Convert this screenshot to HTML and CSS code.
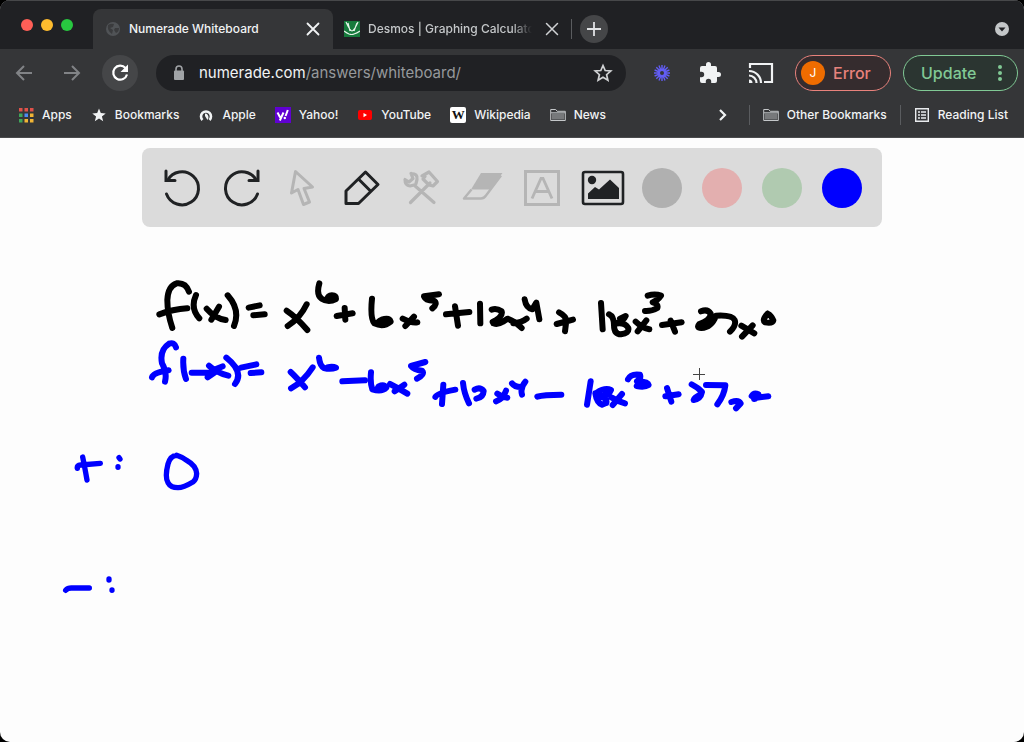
FILE: index.html
```html
<!DOCTYPE html>
<html lang="en">
<head>
<meta charset="utf-8">
<meta name="viewport" content="width=device-width, initial-scale=1">
<title>Numerade Whiteboard</title>
<link rel="stylesheet" href="styles.css">
</head>
<body>
<div class="window">
  <header class="chrome">
    <div class="tabstrip">
      <div class="lights">
        <button class="light light-close" aria-label="Close window"></button>
        <button class="light light-min" aria-label="Minimize window"></button>
        <button class="light light-max" aria-label="Zoom window"></button>
      </div>
      <div class="tab tab-active">
        <svg class="icon" viewBox="0 0 16 16" aria-hidden="true"><circle cx="8" cy="8" r="7" fill="#505356"/><path d="M3 4q3-2 6-1l-1 3-3 1 3 2-1 4q-5-3-4-9zM10 7l4 0q0 4-3 5l-2-3z" fill="#3a3b3d"/></svg>
        <span class="tab-title">Numerade Whiteboard</span>
        <button class="plain" aria-label="Close Numerade Whiteboard"><svg class="icon" viewBox="0 0 16 16"><path d="M2.500 2.500l11 11m0-11l-11 11" stroke="#f1f3f4" stroke-width="1.800" stroke-linecap="round"/></svg></button>
      </div>
      <div class="tab tab-idle">
        <svg class="icon" viewBox="0 0 16 16" aria-hidden="true"><path d="M0 0h16v16H0z" fill="#167a3c"/><path d="M0 10q3 2 5 3 3 1 5 0 3-1 6-3M2 1q4 9 6 9t6-9M4 2l2 8m7-8l-3 8" fill="none" stroke="#e5f3e9" stroke-width="1.200"/></svg>
        <span class="tab-title tab-faded">Desmos | Graphing Calculator</span>
        <button class="plain" aria-label="Close Desmos"><svg class="icon" viewBox="0 0 16 16"><path d="M2.500 2.500l11 11m0-11l-11 11" stroke="#d0d2d4" stroke-width="1.500" stroke-linecap="round"/></svg></button>
      </div>
      <span class="rule"></span>
      <button class="new-tab" aria-label="New tab"><svg class="icon" viewBox="0 0 16 16"><path d="M8 1v14M1 8h14" stroke="#e0e2e4" stroke-width="1.800"/></svg></button>
      <button class="plain tab-search" aria-label="Search tabs"><svg class="icon" viewBox="0 0 16 16"><circle cx="8" cy="8" r="7" fill="#c4c7c9"/><path d="M4.500 6.500h7L8 10.500z" fill="#202124"/></svg></button>
    </div>

    <nav class="toolbar" aria-label="Navigation">
      <button class="nav-btn" aria-label="Back"><svg class="glyph" viewBox="0 0 20 20"><path d="M18 10H3m7-7l-7 7 7 7" fill="none" stroke="#818386" stroke-width="2"/></svg></button>
      <button class="nav-btn" aria-label="Forward"><svg class="glyph" viewBox="0 0 20 20"><path d="M2 10h15m-7-7l7 7-7 7" fill="none" stroke="#818386" stroke-width="2"/></svg></button>
      <button class="nav-btn nav-reload" aria-label="Reload"><svg class="glyph" viewBox="0 0 20 20"><path d="M15.500 5A7 7 0 1 0 17 11.500" fill="none" stroke="#fff" stroke-width="2.200"/><path d="M18 1.500V9h-7.500z" fill="#fff"/></svg></button>
      <div class="omnibox">
        <svg class="icon" viewBox="0 0 16 16" aria-hidden="true"><path d="M5 7V4a3 3 0 0 1 6 0v3" fill="none" stroke="#a0a3a6" stroke-width="1.600"/><rect x="3" y="5.500" width="10" height="9.500" rx="1" fill="#a0a3a6"/></svg>
        <a class="url" href="#"><span class="host">numerade.com</span>/answers/whiteboard/</a>
        <button class="plain" aria-label="Bookmark this page"><svg class="glyph" viewBox="0 0 20 20"><path d="M10 2.500l2.200 5 5.600.5-4.200 3.700 1.300 5.500L10 14.300l-4.900 2.900 1.300-5.500L2.200 8l5.600-.5z" fill="none" stroke="#d0d2d4" stroke-width="1.700"/></svg></button>
      </div>
      <div class="extensions">
        <button class="plain" aria-label="Loom"><svg class="glyph" viewBox="0 0 20 20"><path d="M10 2v16M2 10h16M4.300 4.300l11.400 11.400m0-11.400L4.300 15.700M7 2.600l6 14.800M2.600 7l14.800 6M2.600 13l14.800-6M7 17.400l6-14.800" stroke="#625df5" stroke-width="1.400"/><circle cx="10" cy="10" r="4.500" fill="#625df5"/><circle cx="10" cy="10" r="2" fill="#353638"/></svg></button>
        <button class="plain" aria-label="Extensions"><svg class="big" viewBox="0 0 24 24"><path d="M20.500 11H19V7a2 2 0 0 0-2-2h-4V3.500a2.500 2.500 0 0 0-5 0V5H4a2 2 0 0 0-2 2v3.800h1.500a2.700 2.700 0 0 1 0 5.400H2V20a2 2 0 0 0 2 2h3.800v-1.500a2.700 2.700 0 0 1 5.400 0V22H17a2 2 0 0 0 2-2v-4h1.500a2.500 2.500 0 0 0 0-5z" fill="#f1f3f4"/></svg></button>
        <button class="plain" aria-label="Cast"><svg class="cast" viewBox="0 0 26 22"><path d="M2 6V2h22v18h-8" fill="none" stroke="#f1f3f4" stroke-width="2.200"/><path d="M1 9a12 12 0 0 1 12 12M1 13.500a7.500 7.500 0 0 1 7.500 7.500" fill="none" stroke="#f1f3f4" stroke-width="2.200"/><path d="M1 17.500a3.500 3.500 0 0 1 3.500 3.500H1z" fill="#f1f3f4"/></svg></button>
      </div>
      <button class="pill pill-error"><span class="avatar">J</span>Error</button>
      <button class="pill pill-update">Update<svg class="dots" viewBox="0 0 6 18" aria-hidden="true"><circle cx="3" cy="3" r="2" fill="#81c995"/><circle cx="3" cy="9" r="2" fill="#81c995"/><circle cx="3" cy="15" r="2" fill="#81c995"/></svg></button>
    </nav>

    <nav class="bookmarks" aria-label="Bookmarks">
      <a class="bookmark" href="#"><svg class="icon" viewBox="0 0 16 16"><path d="M1 1h3.500v3.500H1zM6.500 1H10v3.500H6.500zM12 1h3.500v3.500H12z" fill="#e0524a"/><path d="M1 6.500h3.500V10H1zM1 12h3.500v3.500H1z" fill="#3fa65a"/><path d="M6.500 6.500H10V10H6.500z" fill="#4a8af4"/><path d="M12 6.500h3.500V10H12zM6.500 12H10v3.500H6.500zM12 12h3.500v3.500H12z" fill="#f2b535"/></svg>Apps</a>
      <a class="bookmark" href="#"><svg class="icon" viewBox="0 0 16 16"><path d="M8 1.500l1.800 4.600 4.900.3-3.800 3.100 1.300 4.800L8 11.600l-4.200 2.700 1.300-4.800L1.300 6.400l4.900-.3z" fill="#f1f3f4"/></svg>Bookmarks</a>
      <a class="bookmark" href="#"><svg class="icon" viewBox="0 0 16 16"><path d="M4.500 13A5 5 0 1 1 11.500 13" fill="none" stroke="#f1f3f4" stroke-width="2.600"/><path d="M7 6.500q3.500 0 3.500 4.500l-1 2-2.500-4z" fill="#f1f3f4"/></svg>Apple</a>
      <a class="bookmark" href="#"><svg class="icon" viewBox="0 0 16 16"><path d="M0 0h16v16H0z" fill="#6001d2"/><path d="M2.500 5.500l2.700 5M8.500 5.500L4.800 13.500M12.800 3l-2.200 6" stroke="#fff" stroke-width="2"/><circle cx="9.800" cy="11" r="1.200" fill="#fff"/></svg>Yahoo!</a>
      <a class="bookmark" href="#"><svg class="icon" viewBox="0 0 16 16"><rect x="1" y="3" width="14" height="10" rx="2" fill="#f00"/><path d="M6.500 6v4.200L10 8z" fill="#fff"/></svg>YouTube</a>
      <a class="bookmark" href="#"><span class="wiki" aria-hidden="true">W</span>Wikipedia</a>
      <a class="bookmark" href="#"><svg class="icon" viewBox="0 0 16 16"><path d="M.7 13.500v-11h5l1.500 1.800h8.100v9.200z" fill="#353638" stroke="#c4c7c9"/><path d="M1.800 6.500h12.400v6H1.800z" fill="#77797b"/><path d="M1 5.800h14" stroke="#c4c7c9"/></svg>News</a>
      <button class="plain more" aria-label="More bookmarks"><svg class="icon" viewBox="0 0 16 16"><path d="M5 3l5 5-5 5" fill="none" stroke="#f1f3f4" stroke-width="2.200"/></svg></button>
      <span class="rule"></span>
      <a class="bookmark" href="#"><svg class="icon" viewBox="0 0 16 16"><path d="M.7 13.500v-11h5l1.500 1.800h8.100v9.200z" fill="#353638" stroke="#c4c7c9"/><path d="M1.800 6.500h12.400v6H1.800z" fill="#77797b"/><path d="M1 5.800h14" stroke="#c4c7c9"/></svg>Other Bookmarks</a>
      <span class="rule"></span>
      <a class="bookmark" href="#"><svg class="icon" viewBox="0 0 16 16"><path d="M1.700 1.700h12.600v12.600H1.700z" fill="none" stroke="#e8eaed" stroke-width="1.400"/><path d="M4 5h2m1 0h5M4 8h2m1 0h5M4 11h2m1 0h5" stroke="#e8eaed" stroke-width="1.400"/></svg>Reading List</a>
    </nav>
  </header>

  <main class="board">
    <div class="tools" role="toolbar" aria-label="Drawing tools">
      <button class="tool" aria-label="Undo"><svg viewBox="0 0 48 48"><path d="M8.500 30a16.500 16.500 0 1 0 1-13.500" fill="none" stroke="#202224" stroke-width="3" stroke-linecap="round"/><path d="M8 7v9.500h9" fill="none" stroke="#202224" stroke-width="3" stroke-linecap="round"/></svg></button>
      <button class="tool" aria-label="Redo"><svg viewBox="0 0 48 48"><path d="M39.500 30a16.500 16.500 0 1 1-1-13.500" fill="none" stroke="#202224" stroke-width="3" stroke-linecap="round"/><path d="M40 7v9.500h-9" fill="none" stroke="#202224" stroke-width="3" stroke-linecap="round"/></svg></button>
      <button class="tool" aria-label="Select"><svg viewBox="0 0 48 48"><path d="M17.500 7.500L13.500 29l6.500-3.500 5.500 15 6-2.500L26 24.500l8.500-1.500z" fill="none" stroke="#b5b5b5" stroke-width="3" stroke-linejoin="round"/></svg></button>
      <button class="tool" aria-label="Pen"><svg viewBox="0 0 48 48"><path d="M8 39.500V27L27.500 8 40 20.500 20.500 39.500zM20.500 15L33 27.500" fill="none" stroke="#202224" stroke-width="3" stroke-linejoin="round"/></svg></button>
      <button class="tool" aria-label="Shapes"><svg viewBox="0 0 48 48"><path d="M13 9.500l2 5-4 3.500-4-2.500q0 6 5 6.500l4-1L36 38.500M13 9.500q7 0 6 6l-1 4M12.500 38.500L32 19M24 12l7-4 8.500 9.500-4.500 4.500-4-1-6-6 2-2.500z" fill="none" stroke="#b5b5b5" stroke-width="3.200" stroke-linejoin="round" stroke-linecap="round"/></svg></button>
      <button class="tool" aria-label="Eraser"><svg viewBox="0 0 48 48"><path d="M23 9h21.500L32 25.500H13z" fill="#b5b5b5"/><path d="M13.500 25.500L6 34.500H23q3 0 5-3l15-20" fill="none" stroke="#b5b5b5" stroke-width="2.400" stroke-linejoin="round"/></svg></button>
      <button class="tool" aria-label="Text"><svg viewBox="0 0 48 48"><path d="M7.500 7.500h33v33h-33z" fill="none" stroke="#b5b5b5" stroke-width="3"/><path d="M14 34.500l9-20h2l9 20M17.500 27.500h13" fill="none" stroke="#b5b5b5" stroke-width="2.800"/></svg></button>
      <button class="tool" aria-label="Image"><svg viewBox="0 0 48 48"><rect x="5" y="8" width="40" height="32" rx="2" fill="none" stroke="#202224" stroke-width="2.600"/><circle cx="14" cy="16" r="4.200" fill="#202224"/><path d="M10 35v-5.500l7-6.500 4 2.500 11-10 9 8.500v11z" fill="#202224"/></svg></button>
      <button class="tool" aria-label="Gray"><span class="swatch swatch-gray"></span></button>
      <button class="tool" aria-label="Red"><span class="swatch swatch-red"></span></button>
      <button class="tool" aria-label="Green"><span class="swatch swatch-green"></span></button>
      <button class="tool" aria-label="Blue"><span class="swatch swatch-blue"></span></button>
    </div>

    <svg class="ink" viewBox="0 227 1024 515" role="img" aria-label="Handwritten polynomial f(x), f(-x) and sign counts">
      <g class="pen pen-black">
        <g transform="translate(140 270) scale(.33333)">
          <path d="M147 65Q137 37 110 40Q84 48 82 90Q82 130 97 174M58 133Q98 118 142 115M168 75Q150 115 178 145M200 116Q225 145 257 150M237 110L214 149M263 76Q302 120 282 168M326 113L359 106M340 136L374 133M440 122Q470 142 502 180M500 103Q480 145 443 168M538 40Q528 75 545 86Q565 99 588 87Q588 76 576 76Q564 77 562 86M590 138L638 130M614 114L616 149"/>
        </g>
        <g transform="translate(340 270) scale(.33333)">
          <path d="M96 86Q90 145 103 160Q130 173 152 155Q148 142 125 149Q115 153 112 160M188 146Q215 160 232 157M222 140L196 168M297 73L252 79Q257 92 281 92Q295 100 277 115M318 133L388 126M345 109L354 167M420 101L421 160M455 119Q470 114 485 124Q490 139 458 156Q467 168 489 155L502 146Q528 156 545 174M560 146Q545 158 520 160M460 160L480 156M554 88Q558 114 577 118L589 98L598 148"/>
        </g>
        <g transform="translate(540 270) scale(.33333)">
          <path d="M57 127Q78 138 79 152L75 184M50 162L99 149M183 99L188 178M207 133Q222 140 222 165Q222 193 243 193Q268 190 265 174Q254 156 228 161Q252 151 257 138L240 146M287 155Q308 175 328 178M319 151L293 184M323 77Q345 70 363 77Q353 92 338 97Q356 102 352 114Q336 124 315 123M366 165L425 157M392 152L405 185M483 124Q503 116 512 131Q513 149 478 162Q468 173 484 174Q515 172 528 137Q576 134 584 150Q590 165 570 185M604 167L643 190M638 166L606 200M683 131Q665 150 675 157Q698 161 700 151Q694 136 683 131"/>
        </g>
      </g>
      <g class="pen pen-blue">
        <g transform="translate(140 270) scale(.33333)">
          <path d="M108 232Q103 215 87 221Q58 240 66 280Q82 307 75 335M36 322Q40 308 86 301M130 266Q128 300 138 327M155 308H211Q227 295 248 289M207 287Q230 308 265 317M226 306L203 322M259 263Q313 306 285 342M303 293L349 283M332 309L364 307M452 306Q471 324 495 352M518 292Q490 335 453 355M537 263Q540 288 552 294Q572 299 588 293Q578 288 562 292M607 334L675 331"/>
        </g>
        <g transform="translate(340 270) scale(.33333)">
          <path d="M93 307Q90 340 97 358Q125 367 139 353Q132 341 116 349L112 356M150 342Q178 356 202 371M193 344L164 364M256 276L213 288Q222 300 246 302Q256 312 231 326M286 381Q290 370 346 359M310 344L306 402M369 339Q372 370 387 400M404 359Q420 350 431 363Q430 382 409 386M472 371Q485 381 502 383M498 362Q489 387 468 394M516 340Q525 352 545 351M556 335Q540 353 546 374M592 380Q610 374 664 374"/>
        </g>
        <g transform="translate(540 270) scale(.33333)">
          <path d="M152 334L141 404M166 370Q170 398 186 404L198 399M170 368Q195 352 213 360Q208 375 178 381Q203 382 199 399M214 382Q234 394 255 400M246 372L218 405M264 328Q272 310 300 314Q304 325 291 334Q324 334 326 345Q314 353 290 348M376 379L416 373M381 354L394 395M455 343Q475 353 486 366Q482 387 461 390Q464 382 480 374M498 345L556 346Q553 375 532 403M574 396Q596 389 602 400L588 415M635 378Q642 367 655 373Q650 386 642 387M643 384L685 379"/>
        </g>
        <g transform="translate(40 440) scale(.33333)">
          <path class="fine" d="M112 85Q110 76 122 75L181 70M128 51Q134 80 141 120M237 53l3 4M234 80v2M410 46Q391 47 384 72Q374 111 384 128Q392 143 414 143Q430 143 460 125Q469 118 470 101Q469 77 440 61Q428 52 410 46M77 451Q83 444 94 444L148 444M207 417v3M216 450v1"/>
        </g>
      </g>
      <path class="crosshair" d="M693 374.500h12M699.500 368v12"/>
    </svg>
  </main>
</div>
</body>
</html>
```
FILE: styles.css
```css
* { box-sizing: border-box; }

body {
  margin: 0;
  background: #000;
  color: #f1f3f4;
  font: 500 12px/16px Inter, "Liberation Sans", sans-serif;
}

button {
  padding: 0;
  border: 0;
  background: none;
  color: inherit;
  font: inherit;
}

a { color: inherit; text-decoration: none; }

svg { display: block; flex: none; }

.window {
  display: flex;
  flex-direction: column;
  min-height: 100vh;
  overflow: hidden;
  border-radius: 10px;
  background: #fdfdfd;
}

.chrome {
  border-bottom: 1px solid #4a4b4d;
  background: #353638;
}

.icon { width: 16px; height: 16px; }
.glyph { width: 20px; height: 20px; }
.big { width: 24px; height: 24px; }
.cast { width: 26px; height: 22px; }
.plain { flex: none; }

/* Tab strip */
.tabstrip {
  display: flex;
  align-items: center;
  height: 49px;
  padding: 8px 14px 0 21px;
  border-top: 1px solid #47484a;
  background: #202124;
}

.lights { display: flex; gap: 8px; width: 72px; padding-bottom: 8px; }
.light { width: 12px; height: 12px; border-radius: 50%; }
.light-close { background: #ff5f57; }
.light-min { background: #febc2e; }
.light-max { background: #28c840; }

.tab {
  display: flex;
  flex: 0 1 240px;
  align-items: center;
  gap: 8px;
  min-width: 0;
  height: 40px;
  padding: 0 12px;
}

.tab-active {
  border-radius: 8px 8px 0 0;
  background: #353638;
}

.tab-idle {
  flex-basis: 238px;
  padding: 0 11px;
  color: #c4c7c9;
}

.tab-title { flex: 1; overflow: hidden; white-space: nowrap; }

.tab-faded {
  margin-right: 4px;
  -webkit-mask-image: linear-gradient(90deg, #000 88%, transparent);
  mask-image: linear-gradient(90deg, #000 88%, transparent);
}

.rule { flex: none; width: 1px; height: 20px; background: #5a5c5f; }

.new-tab {
  display: grid;
  place-items: center;
  width: 28px;
  height: 28px;
  margin-left: 8px;
  border-radius: 50%;
  background: #454648;
}

.tab-search { margin-left: auto; }

/* Navigation row */
.toolbar {
  display: flex;
  align-items: center;
  height: 48px;
  padding: 0 6px;
}

.nav-btn {
  display: grid;
  flex: none;
  place-items: center;
  width: 36px;
  height: 36px;
  margin-right: 12px;
  border-radius: 50%;
}

.nav-reload { margin-right: 18px; background: #454648; }

.omnibox {
  display: flex;
  flex: 1;
  align-items: center;
  gap: 12px;
  min-width: 0;
  height: 36px;
  padding: 0 13px 0 15px;
  border-radius: 18px;
  background: #202124;
}

.url {
  flex: 1;
  overflow: hidden;
  color: #96999c;
  font-size: 15px;
  font-weight: 400;
  line-height: 20px;
  white-space: nowrap;
}

.host { color: #f1f3f4; }

.extensions {
  display: flex;
  align-items: center;
  gap: 26px;
  padding: 0 21px 0 26px;
}

.pill {
  display: flex;
  flex: none;
  align-items: center;
  height: 36px;
  border: 1px solid;
  border-radius: 18px;
  font-size: 16px;
  line-height: 20px;
}

.pill-error {
  gap: 8px;
  width: 96px;
  margin-right: 12px;
  padding-left: 5px;
  background: #352c2e;
  color: #e8827c;
}

.avatar {
  width: 24px;
  height: 24px;
  border-radius: 50%;
  background: #ef6c00;
  color: #fff;
  font-size: 12px;
  font-weight: 400;
  line-height: 24px;
  text-align: center;
}

.pill-update {
  justify-content: space-between;
  width: 115px;
  padding: 0 14px 0 17px;
  background: #2b3531;
  color: #81c995;
}

.dots { width: 6px; height: 18px; }

/* Bookmarks row */
.bookmarks {
  display: flex;
  align-items: center;
  height: 40px;
  padding: 0 16px 4px 18px;
  white-space: nowrap;
}

.bookmark {
  display: flex;
  flex: none;
  align-items: center;
  gap: 8px;
  margin-right: 19px;
}

.bookmark:last-child { margin-right: 0; }
.more { margin-left: auto; margin-right: 18px; }
.rule + .bookmark { margin-left: 13px; }
.rule + .bookmark:not(:last-child) { margin-right: 13px; }

.wiki {
  width: 16px;
  height: 16px;
  border-radius: 2px;
  background: #fff;
  color: #111;
  font: 700 13px/16px "Liberation Serif", serif;
  text-align: center;
}

/* Whiteboard */
.board { flex: 1; padding-top: 10px; }

.tools {
  display: grid;
  grid-template-columns: repeat(12, 60px);
  justify-content: center;
  width: fit-content;
  margin: 0 auto;
  padding: 0 10px;
  border-radius: 8px;
  background: #dbdbdb;
}

.tool {
  display: grid;
  place-items: center;
  height: 79px;
}

.tool svg { width: 48px; height: 48px; }

.swatch { width: 40px; height: 40px; border-radius: 50%; }
.swatch-gray { background: #b0b0b0; }
.swatch-red { background: #e3afaf; }
.swatch-green { background: #b0cab0; }
.swatch-blue { background: #00f; }

.ink { width: 100%; height: auto; }

.pen {
  fill: none;
  stroke-width: 18;
  stroke-linecap: round;
  stroke-linejoin: round;
}

.pen-black { stroke: #000; }
.pen-blue { stroke: #00f; }
.fine { stroke-width: 16; }

.crosshair { fill: none; stroke: #444; stroke-width: 1; }
```
